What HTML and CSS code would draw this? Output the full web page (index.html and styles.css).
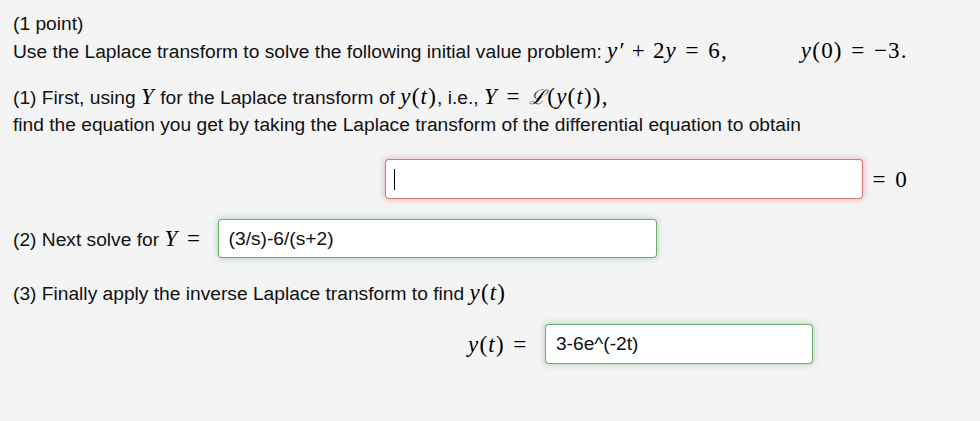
FILE: index.html
```html
<!DOCTYPE html>
<html>
<head>
<meta charset="utf-8">
<link rel="stylesheet" href="styles.css">
</head>
<body>
<div class="problem">
  <div class="line l1">(1 point)</div>
  <div class="line l2">Use the Laplace transform to solve the following initial value problem: <span class="math"><span class="mi">y</span><span class="prime">′</span><span class="mo bin">+</span>2<span class="mi">y</span><span class="mo rel">=</span>6,</span><span class="qquad"></span><span class="math"><span class="mi">y</span>(0)<span class="mo rel">=</span>−3.</span></div>
  <div class="line l3">(1) First, using <span class="math"><span class="mi">Y</span></span> for the Laplace transform of <span class="math"><span class="mi">y</span>(<span class="mi">t</span>)</span>, i.e., <span class="math"><span class="mi">Y</span><span class="mo rel">=</span><span class="cal">ℒ</span>(<span class="mi">y</span>(<span class="mi">t</span>)),</span></div>
  <div class="line l4">find the equation you get by taking the Laplace transform of the differential equation to obtain</div>
  <div class="row r5">
    <div class="answer wrong"><span class="caret"></span></div>
    <span class="math eq0"><span class="mo rel">=</span>0</span>
  </div>
  <div class="row r6">
    <span class="label">(2) Next solve for <span class="math"><span class="mi">Y</span><span class="mo rel">=</span></span></span>
    <div class="answer right w2">(3/s)-6/(s+2)</div>
  </div>
  <div class="line l7">(3) Finally apply the inverse Laplace transform to find <span class="math"><span class="mi">y</span>(<span class="mi">t</span>)</span></div>
  <div class="row r8">
    <span class="math"><span class="mi">y</span>(<span class="mi">t</span>)<span class="mo rel">=</span></span>
    <div class="answer right w3">3-6e^(-2t)</div>
  </div>
</div>
</body>
</html>
```
FILE: styles.css
```css
html, body {
  margin: 0;
  padding: 0;
  background: #f4f4f4;
}
body {
  font-family: "Liberation Sans", Arial, sans-serif;
  font-size: 19.2px;
  color: #111;
  height: 421px;
  overflow: hidden;
}
.problem {
  padding: 10px 13px 0 13px;
}
.line {
  line-height: 27px;
  height: 27px;
  white-space: nowrap;
}
.l1 { height: 28px; }
.l3 { margin-top: 19px; }
.math {
  font-family: "Liberation Serif", "Times New Roman", serif;
  font-size: 23px;
  line-height: 1;
  letter-spacing: 1.2px;
  color: #000;
}
.mi { font-style: italic; }
.prime { font-family: "Liberation Serif", serif; font-size: 24px; margin-left: 1px; letter-spacing: 0; }
.mo.bin { margin: 0 7px; }
.mo.rel { margin: 0 8.5px; }
.qquad { display: inline-block; width: 73px; }
.cal { font-family: "DejaVu Serif", serif; font-style: italic; font-size: 20px; }
.row {
  display: flex;
  align-items: center;
}
.r5 { margin-top: 21px; padding-left: 372px; }
.r6 { margin-top: 20px; }
.l7 { margin-top: 22px; }
.r8 { margin-top: 17px; padding-left: 455px; }
.answer {
  box-sizing: border-box;
  height: 40px;
  background: #fff;
  border: 1px solid #ccc;
  border-radius: 4px;
  padding: 0 10px;
  display: flex;
  align-items: center;
  font-size: 19.2px;
  letter-spacing: 0;
  color: #111;
}
.wrong {
  width: 478px;
  border-color: rgba(205, 85, 85, 0.8);
  box-shadow: 0 0 7px rgba(205, 85, 85, 0.45);
}
.right {
  border-color: rgba(81, 160, 81, 0.85);
  box-shadow: 0 0 7px rgba(81, 160, 81, 0.45);
}
.w2 { width: 439px; height: 39px; margin-left: 8px; }
.w3 { width: 268px; margin-left: 9px; }
.caret {
  display: inline-block;
  width: 1px;
  height: 21px;
  background: #000;
  margin-left: -2px;
}
.eq0 { margin-left: 1px; }
```
